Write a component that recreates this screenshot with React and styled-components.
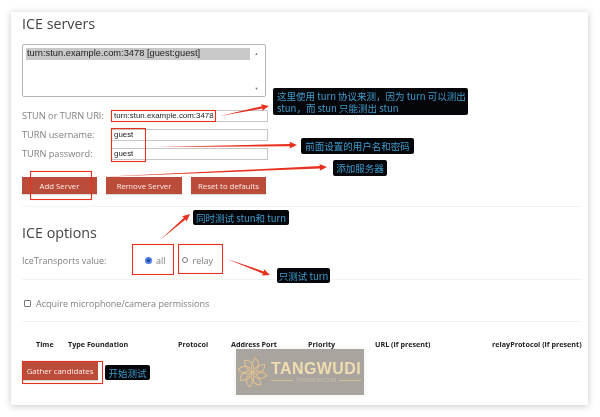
import React from "react";
import styled, { createGlobalStyle } from "styled-components";

const Global = createGlobalStyle`
  html, body { margin: 0; padding: 0; background: #fff; }
  #root { width: 600px; height: 417px; overflow: hidden; }
`;
const Page = styled.div`
  position: relative;
  width: 600px;
  height: 417px;
  padding: 12px 12px 12px 11px;
  box-sizing: border-box;
  background: #fff;
  font-family: "Open Sans", "Noto Sans", sans-serif;
  overflow: hidden;
  filter: blur(0.25px);
`;
const Card = styled.div`
  height: 393px;
  box-sizing: border-box;
  padding: 2px 6px 0 11px;
  background: #fff;
  box-shadow: 0 1px 7px rgba(0, 0, 0, 0.22);
`;
const Heading = styled.h2`
  margin: ${(p) => p.$top || 0}px 0 0;
  font-size: 14.3px;
  line-height: 20px;
  font-weight: 400;
  color: #444;
`;
const ListBox = styled.div`
  display: flex;
  width: 244px;
  height: 53px;
  margin-top: 10px;
  box-sizing: border-box;
  padding: 3px 2px 3px 3px;
  border: 1px solid #b5b5b5;
  border-radius: 2px;
  background: #fff;
`;
const ListItems = styled.div`
  flex: 1;
`;
const ListItem = styled.div`
  height: 12px;
  padding-left: 1px;
  background: #c8c8c8;
  font: 9.3px/11px "Liberation Sans", sans-serif;
  color: #222;
`;
const ScrollBar = styled.div`
  width: 13px;
  display: flex;
  flex-direction: column;
  justify-content: space-between;
  align-items: center;
  padding: 3px 0 2px;
  color: #777;
  font-size: 4px;
  line-height: 5px;
`;
const Form = styled.div`
  margin-top: 13px;
  display: grid;
  grid-template-columns: 89px 157px;
  row-gap: 7px;
`;
const FieldLabel = styled.label`
  font-size: 9.2px;
  line-height: 12px;
  color: #808080;
`;
const Field = styled.div`
  height: 12px;
  box-sizing: border-box;
  padding-left: 2px;
  border: 1px solid #c6c6c6;
  font: 7.9px/10px "Liberation Sans", sans-serif;
  color: #222;
`;
const ButtonRow = styled.div`
  display: flex;
  gap: 9px;
  margin-top: 17px;
`;
const Button = styled.button`
  width: ${(p) => p.$w}px;
  height: ${(p) => p.$h || 17}px;
  padding: 0;
  border: 0;
  background: #bc4c3a;
  color: #fbeeea;
  font-family: inherit;
  font-size: 7.8px;
  box-shadow: 0 1px 1px rgba(0, 0, 0, 0.15);
`;
const Divider = styled.div`
  height: 1px;
  margin-top: ${(p) => p.$top}px;
  background: #f3f3f3;
`;
const RadioRow = styled.div`
  display: flex;
  align-items: center;
  height: 12px;
  margin-top: 11px;
  font-size: 9px;
  color: #808080;
`;
const RadioLabel = styled.span`
  width: 123px;
`;
const Radio = styled.span`
  width: ${(p) => (p.$on ? 7 : 6)}px;
  height: ${(p) => (p.$on ? 7 : 6)}px;
  box-sizing: border-box;
  border-radius: 50%;
  margin-left: ${(p) => p.$gap}px;
  margin-right: ${(p) => (p.$on ? 4 : 5)}px;
  border: ${(p) => (p.$on ? "2px solid #4a7de8" : "1px solid #777")};
  background: ${(p) => (p.$on ? "#22438f" : "#fff")};
`;
const CheckRow = styled.div`
  display: flex;
  align-items: center;
  height: 14px;
  margin-top: 16px;
  padding-left: 2px;
  font-size: 9px;
  color: #808080;
`;
const CheckBox = styled.span`
  width: 7px;
  height: 7px;
  margin-right: 5px;
  box-sizing: border-box;
  border: 1px solid #777;
  border-radius: 1px;
`;
const TableHead = styled.div`
  display: grid;
  grid-template-columns: 32px 110px 53px 77px 67px 117px 90px;
  margin-top: 17px;
  padding-left: 14px;
  font-size: 7.2px;
  line-height: 11px;
  font-weight: 700;
  color: #222;
  white-space: nowrap;
`;
const GatherRow = styled.div`
  margin-top: 7px;
`;
const Callout = styled.div`
  position: absolute;
  left: ${(p) => p.$x}px;
  top: ${(p) => p.$y}px;
  width: ${(p) => p.$w}px;
  height: ${(p) => p.$h}px;
  box-sizing: border-box;
  border-radius: 2px;
  background: #05060a;
  color: #3f9ccb;
  font-family: "Noto Sans CJK SC", "Noto Sans", sans-serif;
  font-size: 9.5px;
  line-height: 12px;
  text-align: ${(p) => (p.$left ? "left" : "center")};
  padding: 1.5px 0 0 ${(p) => (p.$left ? 4 : 0)}px;
  white-space: nowrap;
`;
const Overlay = styled.svg`
  position: absolute;
  inset: 0;
`;
const Watermark = styled.div`
  position: absolute;
  left: 236px;
  top: 349px;
  width: 128px;
  height: 46px;
  display: flex;
  align-items: center;
  padding-left: 1px;
  box-sizing: border-box;
  background: #a9a59e;
  box-shadow: 0 0 6px rgba(0, 0, 0, 0.08);
`;
const WatermarkText = styled.div`
  margin-left: 3px;
  font-family: "Liberation Sans", sans-serif;
  color: #efdcb0;
`;
const WatermarkName = styled.div`
  font-size: 16px;
  font-weight: 700;
  line-height: 16px;
  letter-spacing: 0.4px;
`;
const WatermarkSite = styled.div`
  display: flex;
  align-items: center;
  gap: 3px;
  font-size: 5px;
  line-height: 7px;
  color: #c9bfa8;
  &::before, &::after {
    content: "";
    flex: 1;
    height: 1px;
    background: #d2c09a;
  }
`;

const boxes = [
  [111, 110, 104, 11],
  [111, 128, 34, 33],
  [30, 171, 61, 28],
  [132, 244, 41, 30],
  [178, 244, 44, 29],
  [22, 361, 80, 22],
];
const arrows = [
  [220, 116, 269, 106],
  [155, 147, 297, 145],
  [98, 177, 327, 167],
  [160, 240, 190, 214],
  [227, 259, 270, 275],
];

function Arrow({ line: [x1, y1, x2, y2] }) {
  const a = Math.atan2(y2 - y1, x2 - x1);
  const pt = (back, side) =>
    `${x2 - back * Math.cos(a) - side * Math.sin(a)},${y2 - back * Math.sin(a) + side * Math.cos(a)}`;
  return (
    <polygon
      points={[`${x1},${y1}`, pt(7, 1.2), pt(7.5, 3.4), `${x2},${y2}`, pt(7.5, -3.4), pt(7, -1.2)].join(" ")}
      fill="#e8301f"
    />
  );
}

function Flower() {
  const petals = [0, 45, 90, 135, 180, 225, 270, 315];
  return (
    <svg width="31" height="31" viewBox="-16 -16 32 32" fill="none" stroke="#e0bf90" strokeWidth="1.1">
      {petals.map((r) => (
        <path key={r} transform={`rotate(${r})`} d="M0 0 C-2 -4 -1 -10 3 -15 C7 -11 7 -6 4 -2" />
      ))}
      <circle r="1.4" fill="#e0bf90" stroke="none" />
    </svg>
  );
}

export default function App() {
  return (
    <Page>
      <Global />
      <Card>
        <Heading>ICE servers</Heading>
        <ListBox>
          <ListItems>
            <ListItem>turn:stun.example.com:3478 [guest:guest]</ListItem>
          </ListItems>
          <ScrollBar>
            <span>▲</span>
            <span>▼</span>
          </ScrollBar>
        </ListBox>
        <Form>
          <FieldLabel>STUN or TURN URI:</FieldLabel>
          <Field>turn:stun.example.com:3478</Field>
          <FieldLabel>TURN username:</FieldLabel>
          <Field>guest</Field>
          <FieldLabel>TURN password:</FieldLabel>
          <Field>guest</Field>
        </Form>
        <ButtonRow>
          <Button $w={75}>Add Server</Button>
          <Button $w={76}>Remove Server</Button>
          <Button $w={75}>Reset to defaults</Button>
        </ButtonRow>
        <Divider $top={12} />
        <Heading $top={16}>ICE options</Heading>
        <RadioRow>
          <RadioLabel>IceTransports value:</RadioLabel>
          <Radio $on $gap={0} />
          <span>all</span>
          <Radio $gap={16} />
          <span>relay</span>
        </RadioRow>
        <Divider $top={13} />
        <CheckRow>
          <CheckBox />
          Acquire microphone/camera permissions
        </CheckRow>
        <Divider $top={11} />
        <TableHead>
          <span>Time</span>
          <span>Type Foundation</span>
          <span>Protocol</span>
          <span>Address Port</span>
          <span>Priority</span>
          <span>URL (if present)</span>
          <span>relayProtocol (if present)</span>
        </TableHead>
        <GatherRow>
          <Button $w={76} $h={18}>Gather candidates</Button>
        </GatherRow>
      </Card>
      <Watermark>
        <Flower />
        <WatermarkText>
          <WatermarkName>TANGWUDI</WatermarkName>
          <WatermarkSite>TANGWUDI.COM</WatermarkSite>
        </WatermarkText>
      </Watermark>
      <Overlay width="600" height="417" viewBox="0 0 600 417">
        {boxes.map(([x, y, w, h]) => (
          <rect key={`${x}-${y}`} x={x + 0.5} y={y + 0.5} width={w} height={h} fill="none" stroke="#e8301f" strokeWidth="1.1" />
        ))}
        {arrows.map((l) => (
          <Arrow key={l[0]} line={l} />
        ))}
      </Overlay>
      <Callout $x={273} $y={88} $w={195} $h={27} $left>
        这里使用 turn 协议来测，因为 turn 可以测出
        <br />
        stun，而 stun 只能测出 stun
      </Callout>
      <Callout $x={301} $y={138} $w={113} $h={16}>前面设置的用户名和密码</Callout>
      <Callout $x={333} $y={160} $w={54} $h={16}>添加服务器</Callout>
      <Callout $x={193} $y={210} $w={96} $h={15}>同时测试 stun和 turn</Callout>
      <Callout $x={277} $y={268} $w={53} $h={15}>只测试 turn</Callout>
      <Callout $x={105} $y={365} $w={45} $h={15}>开始测试</Callout>
    </Page>
  );
}
